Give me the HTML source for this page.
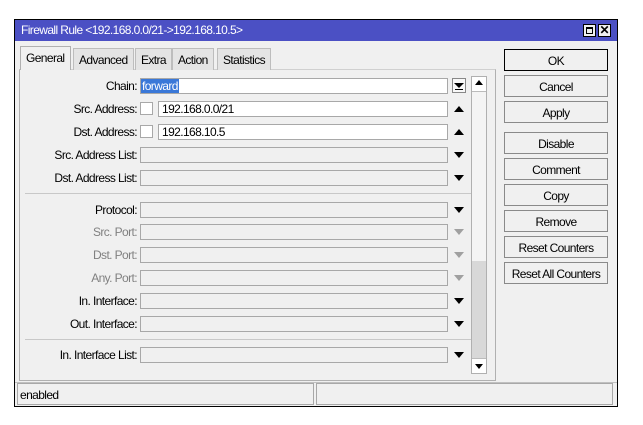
<!DOCTYPE html>
<html><head><style>
*{box-sizing:border-box}
body{margin:0;width:643px;height:425px;background:#fff;font-family:"Liberation Sans",sans-serif;font-size:12px;color:#000;position:relative;overflow:hidden;letter-spacing:-0.6px}
.win{position:absolute;left:14px;top:19px;width:604px;height:388px;background:#f0f0f0;border:1px solid #000}
.title{position:absolute;left:0;top:0;width:602px;height:21px;background:#4b50c4;color:#fff;padding:3px 6px;font-size:12px}
.tb{position:absolute;top:4px;width:13px;height:13px;background:#f0f0f0;border:1px solid #000}
.a{position:absolute}
.tab{position:absolute;top:28px;height:22px;background:#e4e4e4;border:1px solid #bdbdbd;border-bottom:none;padding:4px 5px}
.panel{position:absolute;left:4px;top:49px;width:477px;height:312px;border:1px solid #b0b0b0;border-top:1px solid #d0d0d0}
.lbl{position:absolute;width:130px;text-align:right}
.fld{position:absolute;height:16px;background:#f0f0f0;border:1px solid #a8a8a8}
.fw{background:#fff}
.arr{position:absolute;width:0;height:0;border-left:5px solid transparent;border-right:5px solid transparent;border-top:6px solid #000}
.up{border-top:none;border-bottom:6px solid #000}
.g{border-top-color:#a0a0a0}
.btn{position:absolute;left:489px;width:104px;height:22px;border:1px solid #8a8a8a;background:#f0f0f0;text-align:center;padding-top:4px}
.sep{position:absolute;left:10px;width:462px;height:1px;background:#c8c8c8}
.sb{position:absolute;left:2px;top:363px;height:22px;border:1px solid #a8a8a8;padding:4px 2px}
</style></head><body>
<div class="win">
<div class="title">Firewall Rule &lt;192.168.0.0/21-&gt;192.168.10.5&gt;</div>
<div class="tb" style="left:568px"><div class="a" style="left:2px;top:2px;width:7px;height:7px;border:1px solid #000;border-top-width:2px"></div></div>
<div class="tb" style="left:583px;font-size:12px;font-weight:bold;line-height:10px;text-align:center;letter-spacing:0">✕</div>
<div class="panel"></div>
<div class="tab" style="left:5px;top:26px;height:24px;background:#f0f0f0;z-index:2;border-color:#b0b0b0">General</div>
<div class="tab" style="left:58px">Advanced</div>
<div class="tab" style="left:120px">Extra</div>
<div class="tab" style="left:157px">Action</div>
<div class="tab" style="left:202px">Statistics</div>

<div class="lbl" style="left:-8px;top:59px">Chain:</div>
<div class="fld fw" style="left:125px;top:58px;width:308px"><span style="background:#3a78d8;color:#fff;padding:0 1px">forward</span></div>
<div class="a" style="left:437px;top:58px;width:14px;height:15px;border:1px solid #888;background:#f8f8f8"><div class="arr" style="left:1px;top:4px;border-width:5px 5px 0"></div><div class="a" style="left:2px;top:10px;width:8px;height:1px;background:#000"></div></div>

<div class="lbl" style="left:-8px;top:82px">Src. Address:</div>
<div class="fld fw" style="left:125px;top:82px;width:13px;height:13px"></div>
<div class="fld fw" style="left:143px;top:81px;width:290px;padding-left:3px">192.168.0.0/21</div>
<div class="arr up" style="left:439px;top:86px"></div>
<div class="lbl" style="left:-8px;top:105px">Dst. Address:</div>
<div class="fld fw" style="left:125px;top:105px;width:13px;height:13px"></div>
<div class="fld fw" style="left:143px;top:104px;width:290px;padding-left:3px">192.168.10.5</div>
<div class="arr up" style="left:439px;top:109px"></div>

<div class="lbl" style="left:-8px;top:128px">Src. Address List:</div>
<div class="fld" style="left:125px;top:127px;width:308px"></div><div class="arr" style="left:439px;top:132px"></div>
<div class="lbl" style="left:-8px;top:151px">Dst. Address List:</div>
<div class="fld" style="left:125px;top:150px;width:308px"></div><div class="arr" style="left:439px;top:155px"></div>
<div class="sep" style="top:173px"></div>

<div class="lbl" style="left:-8px;top:183px">Protocol:</div>
<div class="fld" style="left:125px;top:182px;width:308px"></div><div class="arr" style="left:439px;top:187px"></div>
<div class="lbl" style="left:-8px;top:205px;color:#808080">Src. Port:</div>
<div class="fld" style="left:125px;top:204px;width:308px"></div><div class="arr g" style="left:439px;top:209px"></div>
<div class="lbl" style="left:-8px;top:228px;color:#808080">Dst. Port:</div>
<div class="fld" style="left:125px;top:227px;width:308px"></div><div class="arr g" style="left:439px;top:232px"></div>
<div class="lbl" style="left:-8px;top:251px;color:#808080">Any. Port:</div>
<div class="fld" style="left:125px;top:250px;width:308px"></div><div class="arr g" style="left:439px;top:255px"></div>
<div class="lbl" style="left:-8px;top:274px">In. Interface:</div>
<div class="fld" style="left:125px;top:273px;width:308px"></div><div class="arr" style="left:439px;top:278px"></div>
<div class="lbl" style="left:-8px;top:297px">Out. Interface:</div>
<div class="fld" style="left:125px;top:296px;width:308px"></div><div class="arr" style="left:439px;top:301px"></div>
<div class="sep" style="top:319px"></div>
<div class="lbl" style="left:-8px;top:328px">In. Interface List:</div>
<div class="fld" style="left:125px;top:327px;width:308px"></div><div class="arr" style="left:439px;top:332px"></div>

<div class="a" style="left:456px;top:56px;width:16px;height:298px;border:1px solid #b0b0b0;background:#f4f4f4"></div>
<div class="a" style="left:457px;top:241px;width:14px;height:98px;background:#d8d8d8"></div>
<div class="a" style="left:457px;top:57px;width:14px;height:15px;background:#fff;border-bottom:1px solid #bbb"><div class="arr up" style="left:3px;top:3px;border-width:0 4px 5px"></div></div>
<div class="a" style="left:457px;top:338px;width:14px;height:15px;background:#fff;border-top:1px solid #bbb"><div class="arr" style="left:3px;top:5px;border-width:5px 4px 0"></div></div>

<div class="btn" style="top:29px;border:1px solid #000">OK</div>
<div class="btn" style="top:55px">Cancel</div>
<div class="btn" style="top:81px">Apply</div>
<div class="btn" style="top:112px">Disable</div>
<div class="btn" style="top:138px">Comment</div>
<div class="btn" style="top:164px">Copy</div>
<div class="btn" style="top:190px">Remove</div>
<div class="btn" style="top:216px">Reset Counters</div>
<div class="btn" style="top:242px">Reset All Counters</div>

<div class="a" style="left:0;top:362px;width:602px;height:1px;background:#c0c0c0"></div>
<div class="sb" style="width:297px">enabled</div>
<div class="sb" style="left:301px;width:297px"></div>
</div>
</body></html>
